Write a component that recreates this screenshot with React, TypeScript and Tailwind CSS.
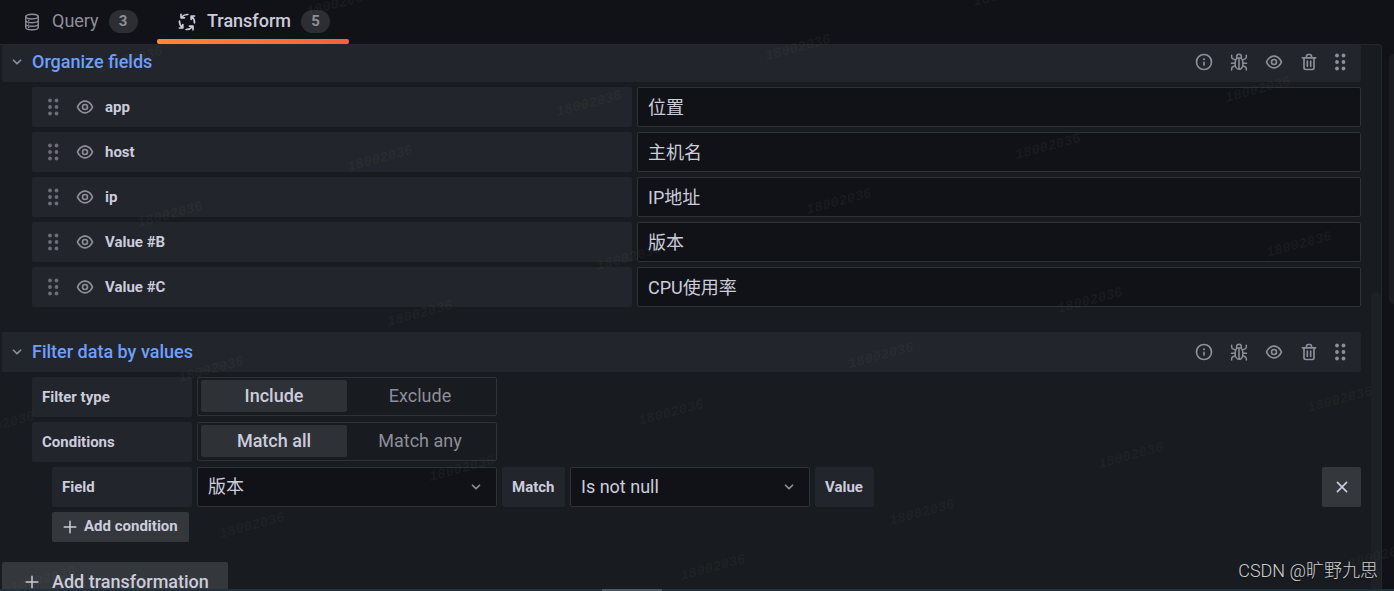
import { useState } from "react";
import type { ReactNode } from "react";

const EYE =
  "M21.92,11.6C19.9,6.91,16.1,4,12,4S4.1,6.91,2.08,11.6a1,1,0,0,0,0,.8C4.1,17.09,7.9,20,12,20s7.9-2.91,9.92-7.6A1,1,0,0,0,21.92,11.6ZM12,18c-3.17,0-6.17-2.29-7.9-6C5.83,8.29,8.83,6,12,6s6.17,2.29,7.9,6C18.17,15.71,15.17,18,12,18ZM12,8a4,4,0,1,0,4,4A4,4,0,0,0,12,8Zm0,6a2,2,0,1,1,2-2A2,2,0,0,1,12,14Z";
const INFO =
  "M12,2A10,10,0,1,0,22,12,10,10,0,0,0,12,2Zm0,18a8,8,0,1,1,8-8A8,8,0,0,1,12,20Zm0-8.5a1,1,0,0,0-1,1v3a1,1,0,0,0,2,0v-3A1,1,0,0,0,12,11.5Zm0-4a1.25,1.25,0,1,0,1.25,1.25A1.25,1.25,0,0,0,12,7.5Z";
const TRASH =
  "M10,18a1,1,0,0,0,1-1V11a1,1,0,0,0-2,0v6A1,1,0,0,0,10,18ZM20,6H16V5a3,3,0,0,0-3-3H11A3,3,0,0,0,8,5V6H4A1,1,0,0,0,4,8H5V19a3,3,0,0,0,3,3h8a3,3,0,0,0,3-3V8h1a1,1,0,0,0,0-2ZM10,5a1,1,0,0,1,1-1h2a1,1,0,0,1,1,1V6H10Zm7,14a1,1,0,0,1-1,1H8a1,1,0,0,1-1-1V8H17Zm-3-1a1,1,0,0,0,1-1V11a1,1,0,0,0-2,0v6A1,1,0,0,0,14,18Z";
const ANGLE =
  "M17,9.17a1,1,0,0,0-1.41,0L12,12.71,8.46,9.17a1,1,0,0,0-1.41,0,1,1,0,0,0,0,1.42l4.24,4.24a1,1,0,0,0,1.42,0L17,10.59A1,1,0,0,0,17,9.17Z";

function Solid({ d }: { d: string }) {
  return (
    <svg viewBox="0 0 24 24" className="size-5 shrink-0 fill-current" aria-hidden="true">
      <path d={d} />
    </svg>
  );
}

function Line({ children, width = 1.8 }: { children: ReactNode; width?: number }) {
  return (
    <svg
      viewBox="0 0 24 24"
      className="size-5 shrink-0 fill-none stroke-current"
      strokeWidth={width}
      strokeLinecap="round"
      strokeLinejoin="round"
      aria-hidden="true"
    >
      {children}
    </svg>
  );
}

function Bug() {
  return (
    <Line>
      <path d="M9.200 7V5.500a2.800 2.800 0 0 1 5.600 0V7" />
      <path d="M9.500 7.200h5c1.500 1.500 2.200 3.500 2.200 6.300 0 4.500-2 7.300-4.700 7.300s-4.700-2.800-4.700-7.300c0-2.800.7-4.800 2.200-6.300zM12 8v12.500" />
      <path d="M3 13.500h4M17 13.500h4M3.200 4v2a2.500 2.500 0 0 0 1.500 2.300l3 1.200M20.800 4v2a2.500 2.500 0 0 1-1.500 2.300l-3 1.200M3.200 21.500v-1.500a2.500 2.500 0 0 1 1.500-2.300l2.800-1.200M20.800 21.500v-1.500a2.500 2.500 0 0 0-1.500-2.300l-2.800-1.200" />
    </Line>
  );
}

function Database() {
  return (
    <Line width={1.7}>
      <ellipse cx="12" cy="5.500" rx="7.500" ry="2.800" />
      <path d="M4.500 5.500v13c0 1.600 3.400 2.800 7.500 2.800s7.500-1.200 7.500-2.800v-13M4.500 10c0 1.600 3.400 2.800 7.500 2.800s7.500-1.200 7.500-2.800M4.500 14.300c0 1.600 3.400 2.800 7.500 2.800s7.500-1.200 7.500-2.800" />
      <path d="M8 10v.1M8 14.400v.1M8 18.500v.1" />
    </Line>
  );
}

function Process() {
  return (
    <Line width={2}>
      {[0, 90, 180, 270].map((angle) => (
        <path
          key={angle}
          transform={`rotate(${angle} 12 12)`}
          d="M21 13a9.500 9.500 0 0 0-3.300-7.600M17 9V4.800h4.200"
        />
      ))}
    </Line>
  );
}

function Dots() {
  return (
    <svg viewBox="0 0 12 18" className="h-[18px] w-3 shrink-0 fill-current" aria-hidden="true">
      {[2.5, 9, 15.5].map((y) => (
        <g key={y}>
          <circle cx="3" cy={y} r="1.900" />
          <circle cx="9.500" cy={y} r="1.900" />
        </g>
      ))}
    </svg>
  );
}

function Plus() {
  return (
    <Line>
      <path d="M12 5v14M5 12h14" />
    </Line>
  );
}

const fields = [
  { name: "app", alias: "位置" },
  { name: "host", alias: "主机名" },
  { name: "ip", alias: "IP地址" },
  { name: "Value #B", alias: "版本" },
  { name: "Value #C", alias: "CPU使用率" },
];

function SectionHeader({ title, className = "" }: { title: string; className?: string }) {
  return (
    <div className={`flex items-center rounded-xs bg-[#22252b] pr-[15px] pl-[5px] ${className}`}>
      <button className="flex items-center gap-[5px] text-[18px] leading-[22px] font-medium text-[#6e9fff]">
        <span className="text-[#8e8e9b]">
          <Solid d={ANGLE} />
        </span>
        {title}
      </button>
      <div className="ml-auto flex items-center gap-[15px] text-[#8e8e9b]">
        <button aria-label="Show help"><Solid d={INFO} /></button>
        <button aria-label="Debug"><Bug /></button>
        <button aria-label="Disable"><Solid d={EYE} /></button>
        <button aria-label="Remove"><Solid d={TRASH} /></button>
        <button aria-label="Drag"><Dots /></button>
      </div>
    </div>
  );
}

function RadioGroup({ id, label, options }: { id: string; label: string; options: string[] }) {
  const [value, setValue] = useState(options[0]);
  return (
    <div role="radiogroup" aria-labelledby={id} className="flex gap-[5px]">
      <span id={id} className="flex h-10 w-40 items-center rounded-xs bg-[#22252b] px-2.5 text-[15px] font-bold">
        {label}
      </span>
      <div className="flex h-[39px] w-[300px] rounded-xs border border-[#2f3136] p-[3px] pt-[2px]">
        {options.map((option) => (
          <label
            key={option}
            className="flex flex-1 items-center justify-center rounded-xs pb-0.5 text-[18px] text-[#8e8e9b] has-checked:bg-[#2e3136] has-checked:font-medium has-checked:text-[#ccccdc]"
          >
            <input
              type="radio"
              name={id}
              checked={value === option}
              onChange={() => setValue(option)}
              className="sr-only"
            />
            {option}
          </label>
        ))}
      </div>
    </div>
  );
}

function Select({ id, value, className }: { id: string; value: string; className: string }) {
  return (
    <div className={`relative h-10 ${className}`}>
      <select
        id={id}
        className="size-full appearance-none rounded-xs border border-[#2f3136] bg-[#111217] px-2.5 pb-0.5 text-[18px]"
      >
        <option>{value}</option>
      </select>
      <span className="pointer-events-none absolute top-2.5 right-[11px] text-[#8e8e9b]">
        <Solid d={ANGLE} />
      </span>
    </div>
  );
}

// centre points of the repeated user stamp
const stamps = [
  [1006, -6], [339, 4], [130, 60], [798, 48], [589, 104], [380, 159], [170, 215],
  [1258, 90], [1048, 147], [839, 202], [629, 258], [420, 314], [211, 370], [2, 425],
  [1299, 245], [1090, 301], [881, 356], [671, 413], [462, 469], [252, 526], [43, 580],
  [1340, 400], [1131, 456], [922, 513], [713, 568], [1381, 556],
];

function Watermark() {
  return (
    <div className="pointer-events-none absolute inset-0 overflow-hidden" aria-hidden="true">
      {stamps.map(([x, y]) => (
        <span
          key={`${x}-${y}`}
          className="absolute -translate-1/2 -rotate-15 font-['Liberation_Mono',monospace] text-[14px] font-bold text-[#8c9678]/8 italic"
          style={{ left: x, top: y }}
        >
          18002036
        </span>
      ))}
    </div>
  );
}

export default function App() {
  return (
    <div className="relative flex h-screen flex-col overflow-hidden bg-[#111217] font-[Roboto,'Noto_Sans_CJK_SC',sans-serif] text-[#ccccdc]">
      {/* TABS */}
      <nav className="flex h-11 shrink-0 text-[18px]">
        <button className="flex w-[157px] flex-col text-[#8e8e9b]">
          <span className="flex flex-1 items-center gap-2.5 pt-1 pl-[22px]">
            <Database />
            <span className="pb-0.5">Query</span>
            <span className="flex h-[23px] w-[29px] items-center justify-center rounded-full bg-[#2d2e33] text-[15px] font-bold">3</span>
          </span>
          <span className="h-[5px]" />
        </button>
        <button className="flex w-48 flex-col">
          <span className="flex flex-1 items-center gap-2.5 pt-1 pl-5 font-medium">
            <Process />
            <span className="pb-0.5">Transform</span>
            <span className="flex h-[23px] w-[29px] items-center justify-center rounded-full bg-[#2d2e33] text-[15px] font-bold text-[#8e8e9b]">5</span>
          </span>
          <span className="h-[5px] w-full rounded-xs bg-linear-to-r from-[#ff8833] to-[#f55f3e]" />
        </button>
      </nav>

      <div className="flex min-h-0 flex-1">
        {/* PANEL */}
        <main className="flex min-w-0 flex-1 rounded-tr-sm border-t border-r border-[#25272c] bg-[#181b1f]">
          <div className="min-w-0 flex-1 pr-2.5 pl-0.5">
            <SectionHeader title="Organize fields" className="h-[37px] pb-[3px]" />
            <div className="mt-[5px] flex flex-col gap-[5px] pl-[30px]">
              {fields.map((field) => (
                <div key={field.name} className="flex gap-[5px]">
                  <div className="flex h-10 w-[600px] items-center rounded-xs bg-[#22252b] pl-[15px] text-[15px] font-bold">
                    <span className="mr-4 text-[#6d6e79]"><Dots /></span>
                    <button className="mr-2.5 text-[#8e8e9b]" aria-label="Toggle field">
                      <Solid d={EYE} />
                    </button>
                    <label htmlFor={field.name}>{field.name}</label>
                  </div>
                  <input
                    id={field.name}
                    defaultValue={field.alias}
                    className="h-10 min-w-0 flex-1 rounded-xs border border-[#2f3136] bg-[#111217] px-2.5 pb-0.5 text-[18px]"
                  />
                </div>
              ))}
            </div>

            <SectionHeader title="Filter data by values" className="mt-[25px] h-10" />
            <div className="mt-[5px] flex flex-col gap-[5px] pl-[30px]">
              <RadioGroup id="filter-type" label="Filter type" options={["Include", "Exclude"]} />
              <RadioGroup id="conditions" label="Conditions" options={["Match all", "Match any"]} />
              <div className="flex gap-[5px] pl-5 text-[15px] font-bold">
                <label htmlFor="field" className="flex h-10 w-[140px] items-center rounded-xs bg-[#22252b] px-2.5">Field</label>
                <Select id="field" value="版本" className="w-[300px] font-normal" />
                <label htmlFor="match" className="flex h-10 w-[63px] items-center rounded-xs bg-[#22252b] px-2.5">Match</label>
                <Select id="match" value="Is not null" className="w-60 font-normal" />
                <span className="flex h-10 w-[59px] items-center rounded-xs bg-[#22252b] px-2.5">Value</span>
                <button className="ml-auto flex h-10 w-[39px] items-center justify-center rounded-xs bg-[#34373b]" aria-label="Remove condition">
                  <Line width={2}><path d="M6.500 6.500l11 11M17.500 6.500l-11 11" /></Line>
                </button>
              </div>
              <button className="ml-5 flex h-[30px] w-[137px] items-center gap-1 rounded-xs bg-[#34373b] pl-2 text-[15px] font-bold whitespace-nowrap">
                <Plus />
                <span className="pb-0.5">Add condition</span>
              </button>
            </div>
            <button className="mt-5 flex h-10 w-[226px] items-center gap-2.5 rounded-xs bg-[#34373b] pl-5 text-[18px] font-medium whitespace-nowrap">
              <Plus />
              <span className="pb-0.5">Add transformation</span>
            </button>
          </div>
          <div className="mt-[247px] w-2.5 rounded-t-full bg-[#1d2024]" />
        </main>
        <div className="mt-2.5 ml-[7px] h-[250px] w-[5px] rounded-l-full bg-[#1b1c21]" />
      </div>

      <Watermark />
      <p className="absolute right-4 bottom-[7px] text-[18px] leading-[26px] font-light text-[#d0d0d0] text-shadow-sm">
        CSDN @旷野九思
      </p>
      <div className="absolute inset-x-0 bottom-0 h-0.5 bg-[#20303c]">
        <div className="ml-[602px] h-full w-[60px] bg-[#4a5661]" />
      </div>
    </div>
  );
}
